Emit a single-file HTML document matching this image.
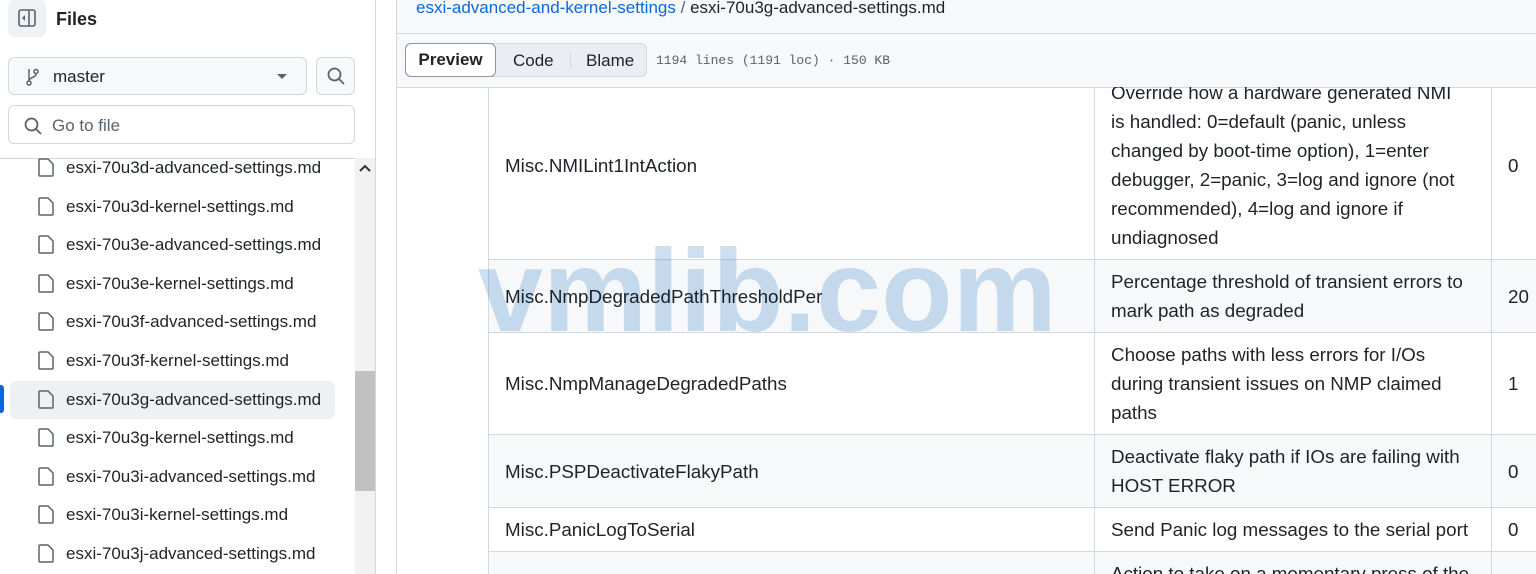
<!DOCTYPE html>
<html><head><style>
*{box-sizing:border-box;margin:0;padding:0}
body{width:1536px;height:574px;overflow:hidden;background:#fff;font-family:"Liberation Sans",sans-serif;color:#1f2328;position:relative}
.side{position:absolute;left:0;top:0;width:376px;height:574px;border-right:1px solid #d1d9e0;background:#fff}
.tb{position:absolute;left:8px;top:0;width:38px;height:37px;background:#eff2f5;border-radius:6px}
.files{position:absolute;left:56px;top:9px;font-size:18px;font-weight:bold}
.branch{position:absolute;left:8px;top:57px;width:299px;height:38px;border:1px solid #d1d9e0;border-radius:6px;background:#f6f8fa}
.sbtn{position:absolute;left:316px;top:57px;width:39px;height:38px;border:1px solid #d1d9e0;border-radius:6px;background:#f6f8fa}
.goto{position:absolute;left:8px;top:105px;width:347px;height:39px;border:1px solid #d1d9e0;border-radius:6px;background:#fff}
.list{position:absolute;left:0;top:158px;width:355px;border-top:1px solid #d1d9e0}
.item{position:absolute;left:10px;width:325px;height:38px;border-radius:6px;font-size:17px;color:#1f2328}
.item span{position:absolute;left:56px;top:9px}
.item svg{position:absolute;left:28px;top:9px}
.sel{background:#eef0f2}
.scroll{position:absolute;left:355px;top:158px;width:20px;height:416px;background:#f1f1f1}
.thumb{position:absolute;left:355px;top:371px;width:20px;height:120px;background:#c1c1c1}
.main{position:absolute;left:376px;top:0;width:1160px;height:574px}
.hdr{position:absolute;left:20px;top:0;width:1140px;height:87px;background:#f6f8fa;border-left:1px solid #d1d9e0}
.crumb{position:absolute;left:40px;top:-2px;font-size:17px}
.crumb a{color:#0969da;text-decoration:none}
.hline{position:absolute;left:20px;top:33px;width:1140px;border-top:1px solid #d1d9e0}
.seg{position:absolute;left:29px;top:43px;width:242px;height:34px;border:1px solid #d1d9e0;border-radius:6px;background:#eaeef2}
.pv{position:absolute;left:-1px;top:-1px;width:91px;height:34px;border:1px solid #8c959f;border-radius:6px;background:#fff;font-weight:bold;font-size:17px;text-align:center;line-height:32px}
.meta{position:absolute;left:280px;top:53px;font-family:"Liberation Mono",monospace;font-size:13px;color:#59636e}
.hb{position:absolute;left:20px;top:87px;width:1140px;border-top:1px solid #d1d9e0}
table{position:absolute;border-collapse:collapse;table-layout:fixed;width:1072px;font-size:18.8px;line-height:29px}
td{border:1px solid #d1d9e0;padding:7px 16px 7px 16px;vertical-align:middle;overflow:hidden;white-space:normal}
td.d{padding-right:22px}
tr.g td{background:#f6f8fa}
.wm{position:absolute;left:478px;top:232px;font-size:117px;font-weight:bold;color:#cde0f1;mix-blend-mode:multiply;line-height:117px;white-space:nowrap}
</style></head><body>
<div class="side">
<div class="tb"><svg width="38" height="37" viewBox="0 0 38 37"><rect x="11" y="10" width="16" height="16" rx="2" fill="none" stroke="#59636e" stroke-width="1.6"/><line x1="21" y1="10" x2="21" y2="26" stroke="#59636e" stroke-width="1.6"/><path d="M17 15l-3 3 3 3z" fill="#59636e"/></svg></div>
<div class="files">Files</div>
<div class="branch"><svg style="position:absolute;left:16px;top:10px" width="16" height="18" viewBox="0 0 16 18"><circle cx="4" cy="15" r="2" fill="none" stroke="#59636e" stroke-width="1.5"/><circle cx="11" cy="3.5" r="2" fill="none" stroke="#59636e" stroke-width="1.5"/><path d="M4 1v12M11 6c0 4-7 3-7 7" fill="none" stroke="#59636e" stroke-width="1.5"/></svg><span style="position:absolute;left:44px;top:9px;font-size:17px">master</span><svg style="position:absolute;left:268px;top:16px" width="10" height="6"><path d="M0 0h10L5 5z" fill="#59636e"/></svg></div>
<div class="sbtn"><svg style="position:absolute;left:9px;top:8px" width="20" height="20" viewBox="0 0 20 20"><circle cx="8.5" cy="8.5" r="6" fill="none" stroke="#59636e" stroke-width="1.8"/><path d="M13 13l5 5" stroke="#59636e" stroke-width="1.8"/></svg></div>
<div class="goto"><svg style="position:absolute;left:14px;top:10px" width="20" height="20" viewBox="0 0 20 20"><circle cx="8.5" cy="8.5" r="6" fill="none" stroke="#59636e" stroke-width="1.8"/><path d="M13 13l5 5" stroke="#59636e" stroke-width="1.8"/></svg><span style="position:absolute;left:43px;top:10px;font-size:17px;color:#59636e">Go to file</span></div>
<div class="list"></div>
<div style="position:absolute;left:0;top:385px;width:4px;height:28px;background:#0969da;border-radius:0 3px 3px 0"></div>
<div class="scroll"></div><div class="thumb"></div>
<svg style="position:absolute;left:358px;top:164px" width="14" height="10"><path d="M2 7l5-5 5 5" fill="none" stroke="#333" stroke-width="2"/></svg>
</div>
<div id="items"></div>
<div class="main">
<div class="hdr"></div>
<div class="crumb"><a>esxi-advanced-and-kernel-settings</a> <span style="color:#59636e">/</span> <b style="font-weight:normal">esxi-70u3g-advanced-settings.md</b></div>
<div class="hline"></div>
<div class="seg"><div class="pv">Preview</div><span style="position:absolute;left:107px;top:7px;font-size:17px">Code</span><span style="position:absolute;left:164px;top:9px;height:16px;border-left:1px solid #d1d9e0"></span><span style="position:absolute;left:180px;top:7px;font-size:17px">Blame</span></div>
<div class="meta">1194 lines (1191 loc) · 150 KB</div>
<div class="hb"></div>
<div style="position:absolute;left:20px;top:87px;width:1140px;height:487px;overflow:hidden;border-left:1px solid #d1d9e0">
<table style="left:91px;top:-17px">
<colgroup><col style="width:606px"><col style="width:397px"><col style="width:69px"></colgroup>
<tr><td>Misc.NMILint1IntAction</td><td class="d">Override how a hardware generated NMI is handled: 0=default (panic, unless changed by boot-time option), 1=enter debugger, 2=panic, 3=log and ignore (not recommended), 4=log and ignore if undiagnosed</td><td>0</td></tr>
<tr class="g"><td>Misc.NmpDegradedPathThresholdPer</td><td>Percentage threshold of transient errors to mark path as degraded</td><td>20</td></tr>
<tr><td>Misc.NmpManageDegradedPaths</td><td>Choose paths with less errors for I/Os during transient issues on NMP claimed paths</td><td>1</td></tr>
<tr class="g"><td>Misc.PSPDeactivateFlakyPath</td><td>Deactivate flaky path if IOs are failing with HOST ERROR</td><td>0</td></tr>
<tr><td>Misc.PanicLogToSerial</td><td>Send Panic log messages to the serial port</td><td>0</td></tr>
<tr class="g"><td>Misc.PanicMomentary</td><td>Action to take on a momentary press of the power button</td><td>0</td></tr>
</table>
</div>
</div>
<div class="wm">vmlib.com</div>
<script>
var n=["esxi-70u3d-advanced-settings.md","esxi-70u3d-kernel-settings.md","esxi-70u3e-advanced-settings.md","esxi-70u3e-kernel-settings.md","esxi-70u3f-advanced-settings.md","esxi-70u3f-kernel-settings.md","esxi-70u3g-advanced-settings.md","esxi-70u3g-kernel-settings.md","esxi-70u3i-advanced-settings.md","esxi-70u3i-kernel-settings.md","esxi-70u3j-advanced-settings.md"];
var h="";n.forEach(function(t,i){var y=149+i*38.6;h+='<div class="item'+(i==6?' sel':'')+'" style="top:'+y+'px"><svg width="16" height="19" viewBox="0 0 16 19"><path d="M2 1h8l5 5v11a1 1 0 0 1-1 1H2a1 1 0 0 1-1-1V2a1 1 0 0 1 1-1z" fill="none" stroke="#59636e" stroke-width="1.5"/></svg><span>'+t+'</span></div>';});
document.getElementById("items").innerHTML=h;
</script>
</body></html>
